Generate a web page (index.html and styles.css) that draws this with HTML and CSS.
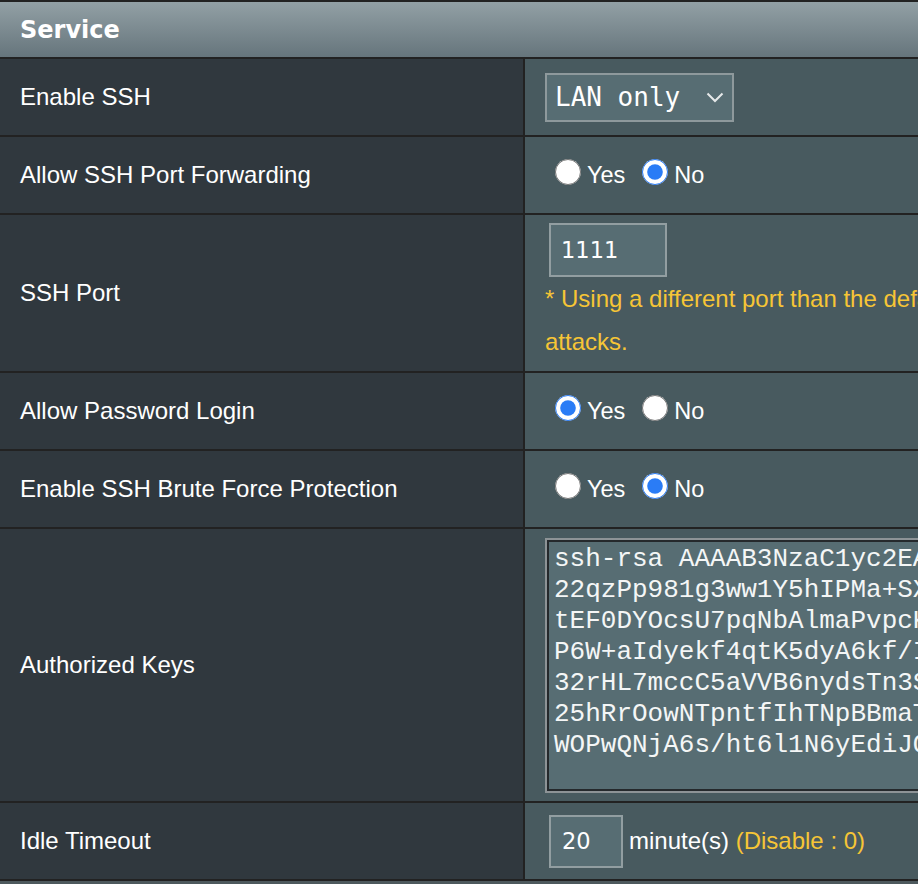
FILE: index.html
```html
<!DOCTYPE html>
<html lang="en">
<head>
  <meta charset="UTF-8">
  <meta name="viewport" content="width=device-width, initial-scale=1.0">
  <title>Service</title>
  <link rel="stylesheet" href="styles.css">
</head>
<body>

  <table class="form-table">
    <thead>
      <tr class="head-row">
        <td colspan="2">Service</td>
      </tr>
    </thead>
    <tbody>
      <!-- SSH on/off -->
      <tr class="row">
        <th>Enable SSH</th>
        <td>
          <div class="select-wrap">
            <select class="input-option">
              <option>No</option>
              <option selected>LAN only</option>
              <option>LAN &amp; WAN</option>
            </select>
            <svg class="chevron" width="18" height="11" viewBox="0 0 18 11">
              <path d="M1.5 1.5 L9 9 L16.5 1.5" fill="none" stroke="#e6e9ea" stroke-width="2"/>
            </svg>
          </div>
        </td>
      </tr>

      <tr class="row">
        <th>Allow SSH Port Forwarding</th>
        <td>
          <div class="radio-group">
            <label class="radio"><input type="radio" name="sshd_forwarding" value="1">Yes</label>
            <label class="radio"><input type="radio" name="sshd_forwarding" value="0" checked>No</label>
          </div>
        </td>
      </tr>

      <!-- Port + hint -->
      <tr class="row row-port">
        <th>SSH Port</th>
        <td>
          <input type="text" class="input-text port-input" value="1111" maxlength="5">
          <div class="hint">* Using a different port than the default is recommended to avoid brute force<br>attacks.</div>
        </td>
      </tr>

      <tr class="row">
        <th>Allow Password Login</th>
        <td>
          <div class="radio-group">
            <label class="radio"><input type="radio" name="sshd_pass" value="1" checked>Yes</label>
            <label class="radio"><input type="radio" name="sshd_pass" value="0">No</label>
          </div>
        </td>
      </tr>

      <tr class="row">
        <th>Enable SSH Brute Force Protection</th>
        <td>
          <div class="radio-group">
            <label class="radio"><input type="radio" name="sshd_bfp" value="1">Yes</label>
            <label class="radio"><input type="radio" name="sshd_bfp" value="0" checked>No</label>
          </div>
        </td>
      </tr>

      <!-- Keys -->
      <tr class="row row-keys">
        <th>Authorized Keys</th>
        <td>
          <textarea class="keys-area" spellcheck="false">ssh-rsa AAAAB3NzaC1yc2EAAAADAQABAAABAQDkq7V3mXoN4bL0Rz9uWcYfT1sHaE5
22qzPp981g3ww1Y5hIPMa+SXr0vKJd8fQe2LmN7tYbCwGh3uZaR6pVx1oIsDkF9eTyU
tEF0DYOcsU7pqNbAlmaPvpcK4wHzR8nQ1yLdXoJ5bVfMe3TgCs2uPaIk7WrNhO6qZlB
P6W+aIdyekf4qtK5dyA6kf/IhG2mZ9sXcTbR1oVnLq8wEu4yJpD3aFk7NtWz5rHeQgS
32rHL7mccC5aVVB6nydsTn3SfK0pWqM9xEo2jLbR4uYtG8hNzA1vDcIs6eJkP7wQrXa
25hRrOowNTpntfIhTNpBBmaTu3LyQ9vKe1sWdFz6gPoX2cJb8nMhR4tA7iYkEqV0lGw
WOPwQNjA6s/ht6l1N6yEdiJQ== admin@router</textarea>
        </td>
      </tr>

      <tr class="row">
        <th>Idle Timeout</th>
        <td>
          <div class="inline-field">
            <input type="text" class="input-text timeout-input" value="20" maxlength="3">
            <span>minute(s) <span class="hint-inline">(Disable : 0)</span></span>
          </div>
        </td>
      </tr>
    </tbody>
  </table>

</body>
</html>
```

FILE: styles.css
```css
html, body {
  margin: 0;
  padding: 0;
}
body {
  background: #4d595d;
  overflow: hidden; /* table is wider than the window */
  font-family: "Liberation Sans", Arial, sans-serif;
}

/* Form table */
.form-table {
  width: 1400px;
  border-collapse: separate;
  border-spacing: 0;
  color: #fff;
  font-size: 24px;
}
.head-row {
  height: 59px;
}
.head-row td {
  padding: 0 20px;
  border-top: 2px solid #222;
  border-bottom: 2px solid #222;
  background: linear-gradient(#92a0a5, #66757c);
  font-family: "DejaVu Sans", Verdana, sans-serif;
  font-weight: bold;
  font-size: 24px;
  text-align: left;
}
.row {
  height: 78px;
}
.row-port {
  height: 158px;
}
.row-keys {
  height: 274px;
}
.row th {
  box-sizing: border-box;
  width: 525px;
  padding: 0 0 0 20px;
  border-right: 2px solid #222;
  border-bottom: 2px solid #222;
  background: #30383e;
  font-weight: normal;
  text-align: left;
  vertical-align: middle;
}
.row td {
  padding: 0 20px;
  border-bottom: 2px solid #222;
  background: #485a5f;
  vertical-align: middle;
}

/* Select */
.select-wrap {
  position: relative;
  width: 189px;
}
.input-option {
  display: block;
  box-sizing: border-box;
  width: 189px;
  height: 49px;
  margin: 0;
  padding: 0 0 0 8px;
  border: 2px solid #8e999c;
  border-radius: 0;
  background: #576d73;
  color: #fff;
  font-family: "DejaVu Sans Mono", "Lucida Console", monospace;
  font-size: 26px;
  appearance: none;
  -webkit-appearance: none;
  outline: none;
}
.chevron {
  position: absolute;
  right: 10px;
  top: 19px;
  pointer-events: none;
}

/* Radios */
.radio-group {
  display: flex;
  align-items: center;
}
.radio {
  display: flex;
  align-items: center;
  margin-right: 7px;
  font-size: 23.5px;
}
.radio input {
  width: 26px;
  height: 26px;
  margin: 0 6px 6px 10px;
  accent-color: #2a7cf6;
}

/* Text inputs */
.input-text {
  box-sizing: border-box;
  margin: 0 0 0 4px;
  border: 2px solid #929ea1;
  border-radius: 0;
  background: #576d73;
  color: #fff;
  font-family: "DejaVu Sans", Verdana, sans-serif;
  font-size: 22.5px;
  outline: none;
}
.port-input {
  display: block;
  width: 118px;
  height: 54px;
  padding: 0 0 0 10px;
}
.timeout-input {
  width: 74px;
  height: 53px;
  padding: 0 0 0 11px;
}
.hint {
  color: #f6c536;
  line-height: 43px;
  white-space: nowrap;
}
.inline-field {
  display: flex;
  align-items: center;
  gap: 6px;
}
.hint-inline {
  color: #f6c536;
}

/* Keys */
.keys-area {
  display: block;
  box-sizing: border-box;
  width: 800px;
  height: 255px;
  margin: 0;
  padding: 4px 7px;
  border: 2px solid #8d9396;
  box-shadow: inset 0 0 0 2px #25292c;
  background: #576d73;
  color: #f4f6f6;
  font-family: "Liberation Mono", "Courier New", monospace;
  font-size: 26px;
  line-height: 31px;
  white-space: pre;
  overflow: hidden;
  resize: none;
  outline: none;
}
```
